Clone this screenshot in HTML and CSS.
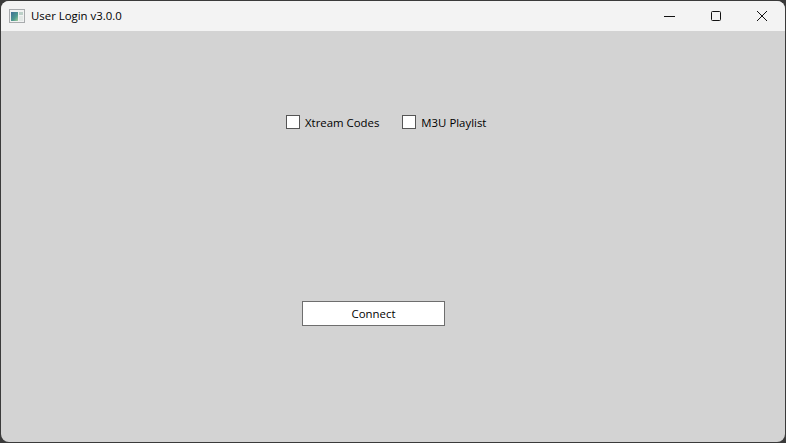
FILE: index.html
```html
<!DOCTYPE html>
<html lang="en">
<head>
    <meta charset="UTF-8">
    <meta name="viewport" content="width=device-width, initial-scale=1.0">
    <title>User Login v3.0.0</title>
    <link rel="stylesheet" href="styles.css">
</head>
<body>
    <div class="window">
        <div class="titlebar">
            <svg class="app-icon" width="16" height="15" viewBox="0 0 16 15">
                <defs>
                    <linearGradient id="panel" x1="0" y1="0" x2="1" y2="1">
                        <stop offset="0" stop-color="#3f6d96"/>
                        <stop offset="0.6" stop-color="#4f9a90"/>
                        <stop offset="1" stop-color="#a9cf9c"/>
                    </linearGradient>
                </defs>
                <rect x="0.5" y="0.5" width="15" height="13" fill="#f1f2f2" stroke="#a8abad"/>
                <rect x="2" y="3" width="7" height="9" fill="url(#panel)"/>
                <rect x="10" y="3" width="4" height="3" fill="#bcd0c8"/>
                <rect x="10" y="7" width="4" height="5" fill="#e3e8e6"/>
            </svg>
            <span class="title">User Login v3.0.0</span>
            <div class="caption-buttons">
                <div class="caption-btn">
                    <svg width="12" height="12" viewBox="0 0 12 12"><path d="M0 6.5H11" stroke="#111" fill="none"/></svg>
                </div>
                <div class="caption-btn">
                    <svg width="12" height="12" viewBox="0 0 12 12"><rect x="1.5" y="1.5" width="9" height="9" rx="1" stroke="#111" fill="none"/></svg>
                </div>
                <div class="caption-btn">
                    <svg width="12" height="12" viewBox="0 0 12 12"><path d="M1 1L11 11M11 1L1 11" stroke="#111" fill="none"/></svg>
                </div>
            </div>
        </div>

        <div class="content">
            <div class="source-row">
                <label class="check"><span class="box"></span>Xtream Codes</label>
                <label class="check"><span class="box"></span>M3U Playlist</label>
            </div>
            <button class="connect">Connect</button>
        </div>
    </div>
</body>
</html>
```

FILE: styles.css
```css
html, body {
    height: 100%;
}

body {
    margin: 0;
    background: #3a3a3a;
    font-family: "Open Sans", "Noto Sans", sans-serif;
    font-size: 11.4px;
    color: #000;
    overflow: hidden;
}

.window {
    box-sizing: border-box;
    height: 441px;
    margin: 1px 1px 0 1px;
    border-radius: 8px;
    background: #d3d3d3;
    overflow: hidden;
    display: flex;
    flex-direction: column;
}

.titlebar {
    height: 30px;
    flex: none;
    background: #f3f3f3;
    display: flex;
    align-items: center;
}

.app-icon {
    margin-left: 8px;
    margin-right: 6px;
}

.title {
    flex: 1;
    margin-bottom: 2px;
}

.caption-buttons {
    display: flex;
}

.caption-btn {
    width: 46px;
    height: 30px;
    display: flex;
    align-items: center;
    justify-content: center;
}

.content {
    flex: 1;
    padding-top: 83px;
}

.source-row {
    display: flex;
    gap: 23px;
    padding-left: 285px;
}

.check {
    display: flex;
    align-items: center;
    gap: 5px;
    height: 16px;
}

.box {
    box-sizing: border-box;
    width: 14px;
    height: 14px;
    background: #fff;
    border: 1px solid #555;
}

.connect {
    display: block;
    box-sizing: border-box;
    width: 143px;
    height: 25px;
    margin: 171px 0 0 301px;
    padding: 0;
    background: #fff;
    border: 1px solid #6e6e6e;
    font: inherit;
    color: #000;
}
```
